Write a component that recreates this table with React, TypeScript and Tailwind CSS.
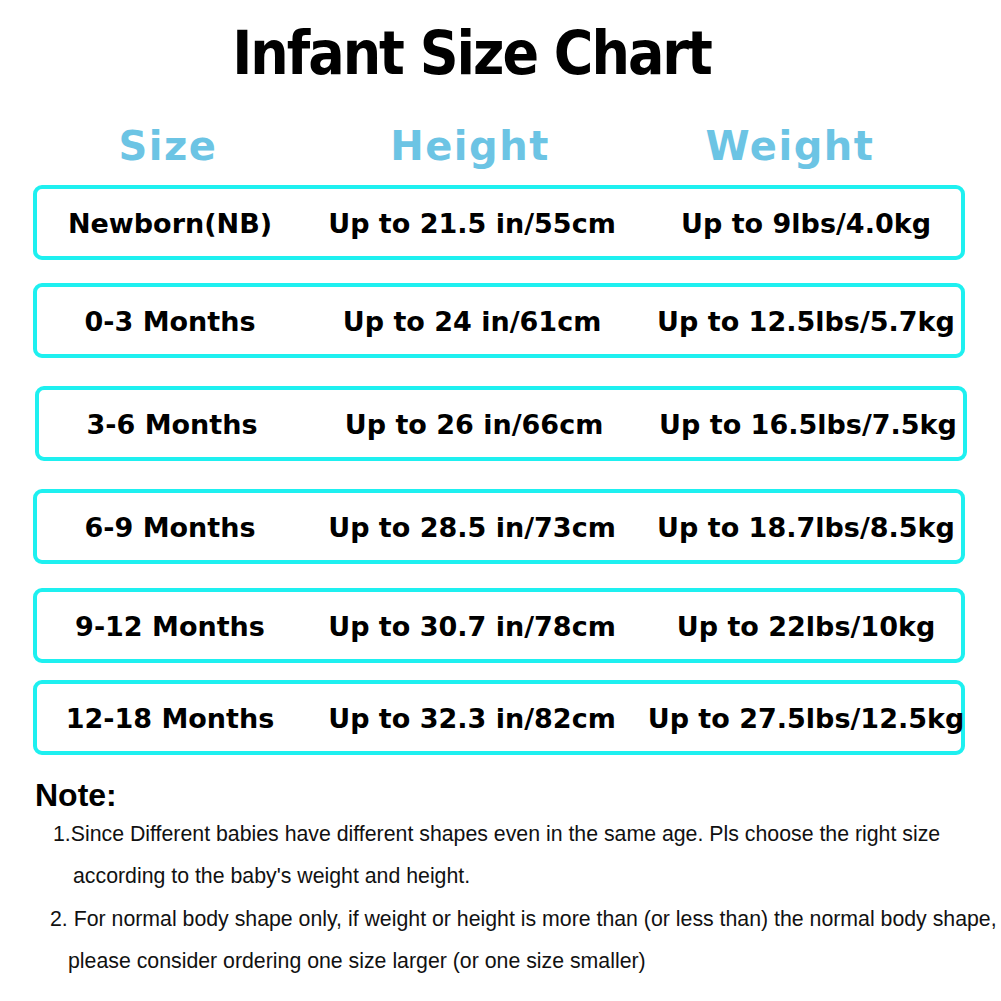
import React from 'react';

const rows = [
  { size: 'Newborn(NB)', height: 'Up to 21.5 in/55cm', weight: 'Up to 9lbs/4.0kg', mt: 'mt-[20px]', ml: 'ml-[33px]' },
  { size: '0-3 Months', height: 'Up to 24 in/61cm', weight: 'Up to 12.5lbs/5.7kg', mt: 'mt-[23px]', ml: 'ml-[33px]' },
  { size: '3-6 Months', height: 'Up to 26 in/66cm', weight: 'Up to 16.5lbs/7.5kg', mt: 'mt-[28px]', ml: 'ml-[35px]' },
  { size: '6-9 Months', height: 'Up to 28.5 in/73cm', weight: 'Up to 18.7lbs/8.5kg', mt: 'mt-[28px]', ml: 'ml-[33px]' },
  { size: '9-12 Months', height: 'Up to 30.7 in/78cm', weight: 'Up to 22lbs/10kg', mt: 'mt-[24px]', ml: 'ml-[33px]' },
  { size: '12-18 Months', height: 'Up to 32.3 in/82cm', weight: 'Up to 27.5lbs/12.5kg', mt: 'mt-[17px]', ml: 'ml-[33px]' },
];

export default function App() {
  return (
    <div className="w-[1001px] h-[1001px] bg-white overflow-hidden relative">
      <h1 className="pt-[18px] pr-[58px] h-[108px] text-center text-[60px] leading-[70px] font-bold text-black tracking-[-2px] font-['DejaVu_Sans_Condensed','DejaVu_Sans',sans-serif]">
        Infant Size Chart
      </h1>

      <div className="grid grid-cols-[266px_338px_302px] ml-[35px] pt-[18px] h-[57px] text-[40px] leading-[40px] tracking-[1.5px] font-bold text-[#6cc4e4] font-['DejaVu_Sans',sans-serif]">
        <div className="text-center">Size</div>
        <div className="text-center">Height</div>
        <div className="text-center">Weight</div>
      </div>

      {rows.map((r, i) => (
        <div
          key={i}
          className={`${r.mt} ${r.ml} w-[932px] h-[75px] border-[4px] border-[#1ef0f0] rounded-[9px] grid grid-cols-[266px_338px_330px] items-center text-[27px] font-bold text-black font-['DejaVu_Sans',sans-serif]`}
        >
          <div className="text-center whitespace-nowrap pt-[4px]">{r.size}</div>
          <div className="text-center whitespace-nowrap pt-[4px]">{r.height}</div>
          <div className="text-center whitespace-nowrap pt-[4px]">{r.weight}</div>
        </div>
      ))}

      <div className="mt-[22px] ml-[35px] text-[32px] leading-[36px] font-bold text-black font-['Liberation_Sans',sans-serif]">Note:</div>
      <div className="text-[21.3px] text-[#111] font-['Liberation_Sans',sans-serif] leading-[42.3px] mt-[0px] whitespace-nowrap">
        <div className="ml-[53px]">1.Since Different babies have different shapes even in the same age. Pls choose the right size</div>
        <div className="ml-[73px]">according to the baby's weight and height.</div>
        <div className="ml-[50px]">2. For normal body shape only, if weight or height is more than (or less than) the normal body shape,</div>
        <div className="ml-[68px]">please consider ordering one size larger (or one size smaller)</div>
      </div>
    </div>
  );
}
